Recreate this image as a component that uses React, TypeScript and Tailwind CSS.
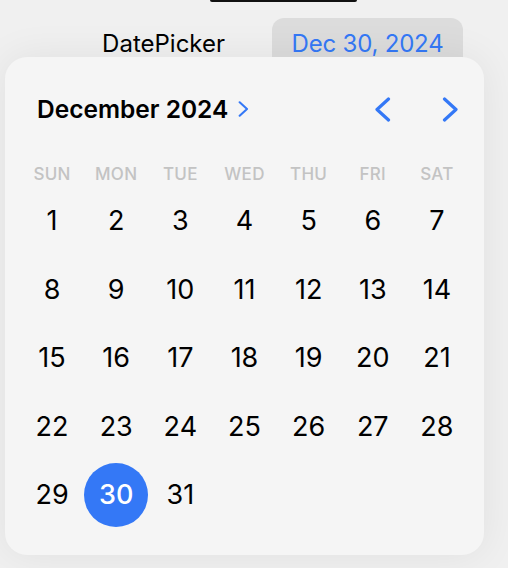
const weekdays = ['SUN', 'MON', 'TUE', 'WED', 'THU', 'FRI', 'SAT'];
const days = Array.from({ length: 31 }, (_, i) => i + 1);
const selected = 30;

function Chevron({ dir, className }: { dir: 'left' | 'right'; className: string }) {
    return (
        <svg viewBox="0 0 17 25" className={className} fill="none" stroke="#3478f6" strokeWidth={3.2} strokeLinecap="round" strokeLinejoin="round">
            {dir === 'left' ? <path d="M14.5 2 L3 12.5 L14.5 23" /> : <path d="M2.5 2 L14 12.5 L2.5 23" />}
        </svg>
    );
}

export default function App() {
    return (
        <div className="relative w-[508px] h-[568px] overflow-hidden bg-[#f0f0f0] font-['Inter',sans-serif]">
            {/* device notch edge */}
            <div className="absolute left-[210px] top-0 w-[147px] h-[2px] rounded-b-full bg-[#111]" />

            <div className="flex items-start pt-[18px]">
                <div className="w-[272px] h-[52px] flex items-center justify-end pr-[47px] text-[24px] text-black">
                    DatePicker
                </div>
                <div className="w-[191px] h-[52px] rounded-[12px] bg-[#dcdcdc] flex items-center justify-center text-[24px] tracking-[-0.2px] text-[#3478f6]">
                    Dec 30, 2024
                </div>
            </div>

            {/* popover calendar */}
            <div className="absolute left-[5px] top-[57px] w-[479px] h-[498px] rounded-[22px] bg-[#f5f5f5] shadow-[0_0_40px_rgba(0,0,0,0.07)] pt-[32px]">
                <div className="h-[40px] flex items-center pl-[32px] pr-[25px]">
                    <span className="text-[24.5px] font-semibold text-black">December 2024</span>
                    <Chevron dir="right" className="ml-[10px] w-[11px] h-[16px]" />
                    <div className="ml-auto flex items-center gap-[51px]">
                        <Chevron dir="left" className="w-[17px] h-[25px]" />
                        <Chevron dir="right" className="w-[17px] h-[25px]" />
                    </div>
                </div>

                <div className="mt-[36px] px-[15px] grid grid-cols-7">
                    {weekdays.map(w => (
                        <div key={w} className="h-[20px] flex items-center justify-center text-[17px] font-medium tracking-[0.3px] text-[#c3c3c3]">
                            {w}
                        </div>
                    ))}
                </div>

                <div className="mt-[2px] px-[15px] grid grid-cols-7">
                    {days.map(d => (
                        <div key={d} className="h-[68.5px] flex items-center justify-center">
                            {d === selected ? (
                                <div className="w-[64px] h-[64px] rounded-full bg-[#3478f6] flex items-center justify-center text-[27px] font-medium text-white">
                                    {d}
                                </div>
                            ) : (
                                <span className="text-[27px] text-black">{d}</span>
                            )}
                        </div>
                    ))}
                </div>
            </div>
        </div>
    );
}
